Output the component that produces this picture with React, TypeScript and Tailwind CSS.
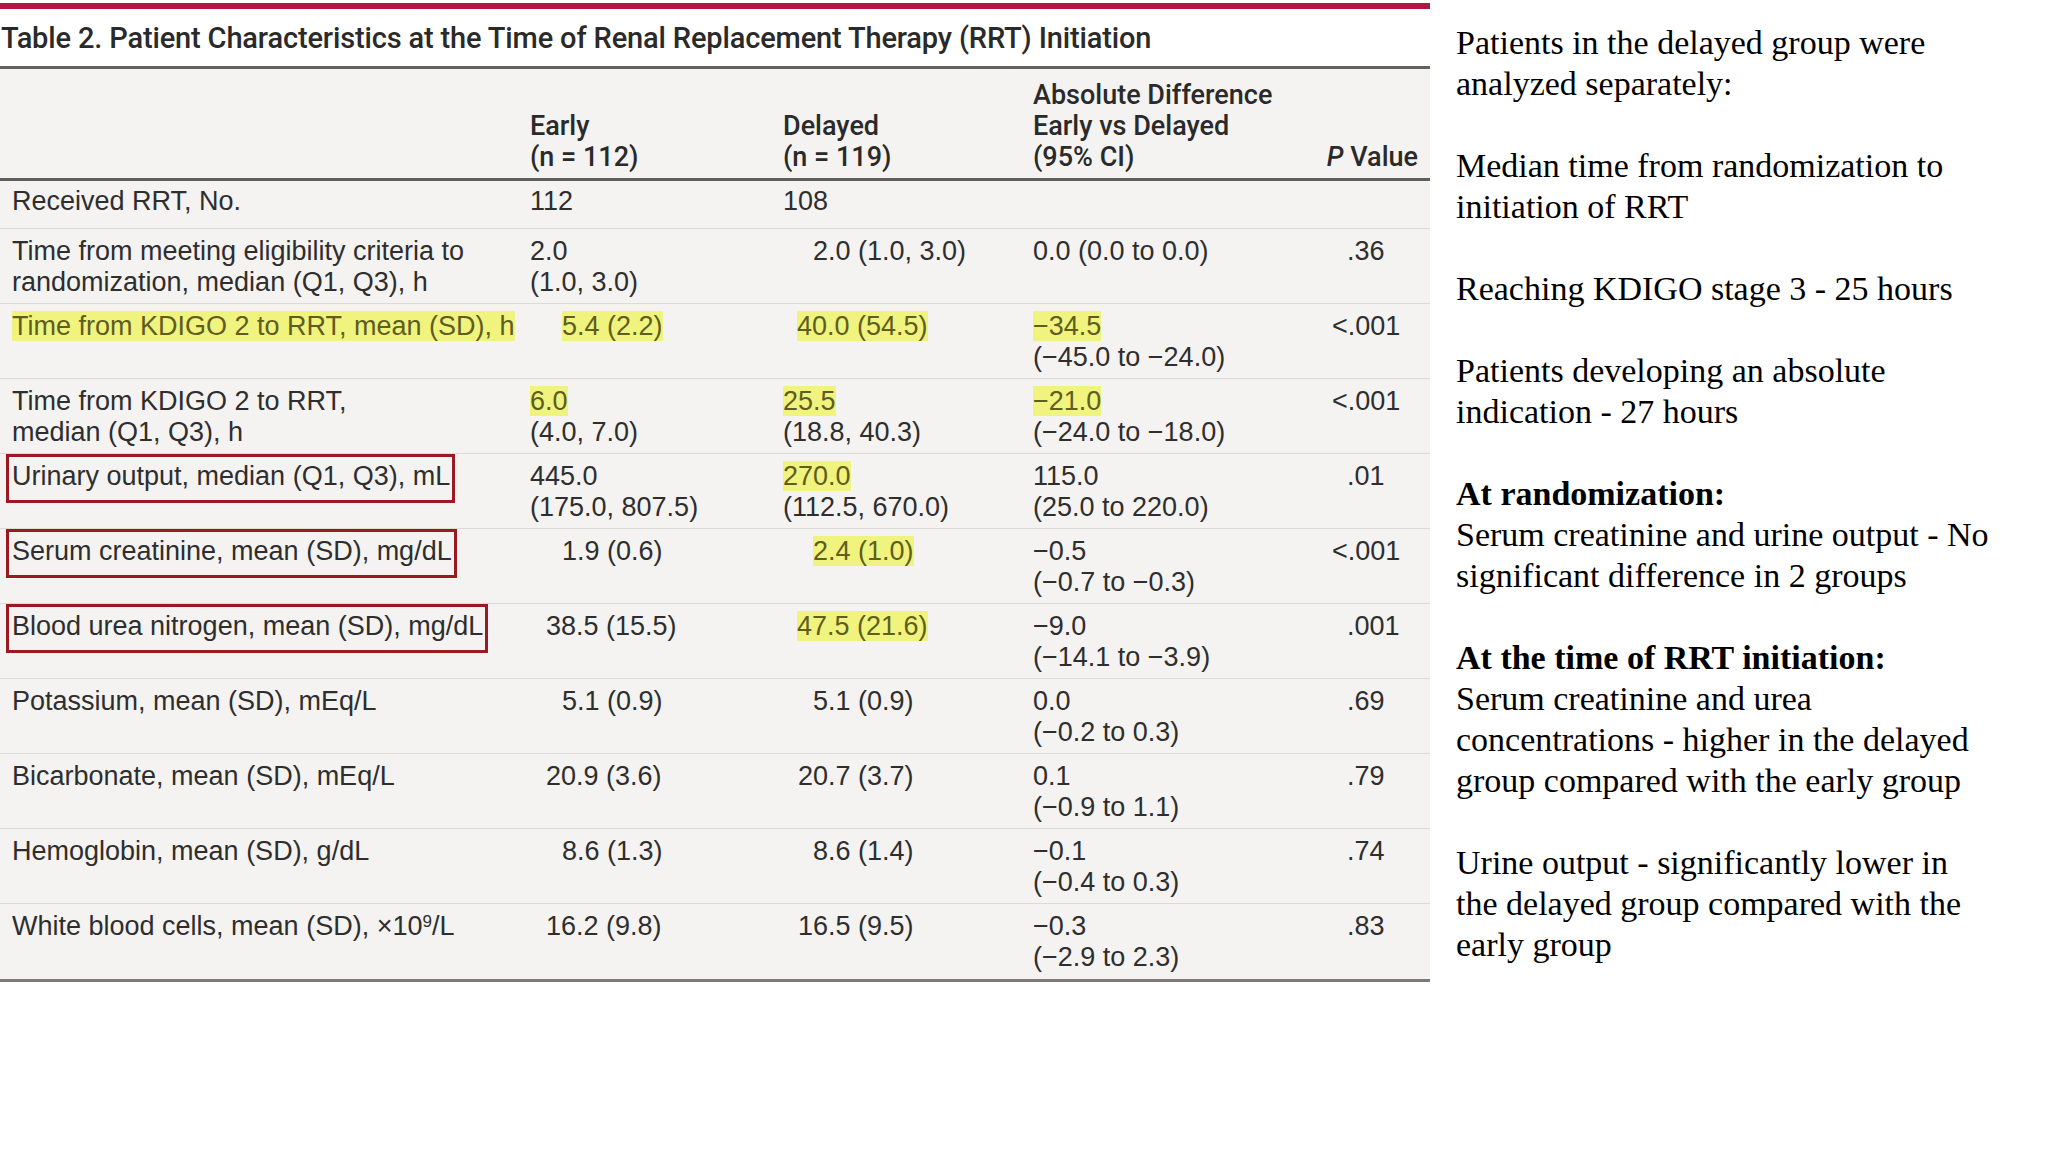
import React from "react";

type Seg = { t: React.ReactNode; hl?: boolean };
type Cell = { lines: Seg[]; off?: number } | null;
type Row = {
  label: Seg[];
  box?: boolean;
  early: Cell;
  delayed: Cell;
  diff: Cell;
  p: { t: string; off: number } | null;
  first?: boolean;
};

const M = "\u2212";

const rows: Row[] = [
  {
    first: true,
    label: [{ t: "Received RRT, No." }],
    early: { lines: [{ t: "112" }], off: 0 },
    delayed: { lines: [{ t: "108" }], off: 1 },
    diff: null,
    p: null,
  },
  {
    label: [{ t: "Time from meeting eligibility criteria to" }, { t: "randomization, median (Q1, Q3), h" }],
    early: { lines: [{ t: "2.0" }, { t: "(1.0, 3.0)" }], off: 0 },
    delayed: { lines: [{ t: "2.0 (1.0, 3.0)" }], off: 31 },
    diff: { lines: [{ t: "0.0 (0.0 to 0.0)" }] },
    p: { t: ".36", off: 16 },
  },
  {
    label: [{ t: "Time from KDIGO 2 to RRT, mean (SD), h", hl: true }],
    early: { lines: [{ t: "5.4 (2.2)", hl: true }], off: 32 },
    delayed: { lines: [{ t: "40.0 (54.5)", hl: true }], off: 15 },
    diff: { lines: [{ t: `${M}34.5`, hl: true }, { t: `(${M}45.0 to ${M}24.0)` }] },
    p: { t: "<.001", off: 1 },
  },
  {
    label: [{ t: "Time from KDIGO 2 to RRT," }, { t: "median (Q1, Q3), h" }],
    early: { lines: [{ t: "6.0", hl: true }, { t: "(4.0, 7.0)" }], off: 0 },
    delayed: { lines: [{ t: "25.5", hl: true }, { t: "(18.8, 40.3)" }], off: 1 },
    diff: { lines: [{ t: `${M}21.0`, hl: true }, { t: `(${M}24.0 to ${M}18.0)` }] },
    p: { t: "<.001", off: 1 },
  },
  {
    label: [{ t: "Urinary output, median (Q1, Q3), mL" }],
    box: true,
    early: { lines: [{ t: "445.0" }, { t: "(175.0, 807.5)" }], off: 0 },
    delayed: { lines: [{ t: "270.0", hl: true }, { t: "(112.5, 670.0)" }], off: 1 },
    diff: { lines: [{ t: "115.0" }, { t: "(25.0 to 220.0)" }] },
    p: { t: ".01", off: 16 },
  },
  {
    label: [{ t: "Serum creatinine, mean (SD), mg/dL" }],
    box: true,
    early: { lines: [{ t: "1.9 (0.6)" }], off: 32 },
    delayed: { lines: [{ t: "2.4 (1.0)", hl: true }], off: 31 },
    diff: { lines: [{ t: `${M}0.5` }, { t: `(${M}0.7 to ${M}0.3)` }] },
    p: { t: "<.001", off: 1 },
  },
  {
    label: [{ t: "Blood urea nitrogen, mean (SD), mg/dL" }],
    box: true,
    early: { lines: [{ t: "38.5 (15.5)" }], off: 16 },
    delayed: { lines: [{ t: "47.5 (21.6)", hl: true }], off: 15 },
    diff: { lines: [{ t: `${M}9.0` }, { t: `(${M}14.1 to ${M}3.9)` }] },
    p: { t: ".001", off: 16 },
  },
  {
    label: [{ t: "Potassium, mean (SD), mEq/L" }],
    early: { lines: [{ t: "5.1 (0.9)" }], off: 32 },
    delayed: { lines: [{ t: "5.1 (0.9)" }], off: 31 },
    diff: { lines: [{ t: "0.0" }, { t: `(${M}0.2 to 0.3)` }] },
    p: { t: ".69", off: 16 },
  },
  {
    label: [{ t: "Bicarbonate, mean (SD), mEq/L" }],
    early: { lines: [{ t: "20.9 (3.6)" }], off: 16 },
    delayed: { lines: [{ t: "20.7 (3.7)" }], off: 16 },
    diff: { lines: [{ t: "0.1" }, { t: `(${M}0.9 to 1.1)` }] },
    p: { t: ".79", off: 16 },
  },
  {
    label: [{ t: "Hemoglobin, mean (SD), g/dL" }],
    early: { lines: [{ t: "8.6 (1.3)" }], off: 32 },
    delayed: { lines: [{ t: "8.6 (1.4)" }], off: 31 },
    diff: { lines: [{ t: `${M}0.1` }, { t: `(${M}0.4 to 0.3)` }] },
    p: { t: ".74", off: 16 },
  },
  {
    label: [
      {
        t: (
          <>
            White blood cells, mean (SD), ×10<sup className="text-[17px]">9</sup>/L
          </>
        ),
      },
    ],
    early: { lines: [{ t: "16.2 (9.8)" }], off: 16 },
    delayed: { lines: [{ t: "16.5 (9.5)" }], off: 16 },
    diff: { lines: [{ t: `${M}0.3` }, { t: `(${M}2.9 to 2.3)` }] },
    p: { t: ".83", off: 16 },
  },
];

function Line({ s }: { s: Seg }) {
  return (
    <div className="whitespace-nowrap">
      {s.hl ? <span className="bg-[#f0f37e] text-[#5f5d1f]">{s.t}</span> : s.t}
    </div>
  );
}

function CellView({ c }: { c: Cell }) {
  if (!c) return <div />;
  return (
    <div style={{ paddingLeft: c.off ?? 0 }}>
      {c.lines.map((s, i) => (
        <Line key={i} s={s} />
      ))}
    </div>
  );
}

export default function App() {
  const grid = "grid grid-cols-[530px_252px_251px_298px_99px]";
  return (
    <div className="w-[2048px] h-[1152px] bg-white flex overflow-hidden">
      {/* Left: table */}
      <div className="w-[1430px] shrink-0 flex flex-col">
        <div className="mt-[3px] h-[6px] bg-[#b3163e]" />
        <div
          className="mt-[12px] h-[34px] leading-[34px] text-[29px] font-medium text-[#2a2a2a] tracking-[-0.15px] whitespace-nowrap pl-[1px]"
          style={{ fontFamily: "Roboto, 'Liberation Sans', sans-serif" }}
        >
          Table 2. Patient Characteristics at the Time of Renal Replacement Therapy (RRT) Initiation
        </div>
        <div className="mt-[11px] h-[3px] bg-[#626262]" />
        <div
          className="bg-[#f4f3f1] text-[27px] leading-[31px] text-[#2e2e2e]"
          style={{ fontFamily: "'Liberation Sans', Arial, sans-serif" }}
        >
          {/* Header */}
          <div
            className={`${grid} h-[109px] items-end pb-[5px] font-medium text-[#2a2a2a]`}
            style={{ fontFamily: "Roboto, 'Liberation Sans', sans-serif" }}
          >
            <div />
            <div>
              <div>Early</div>
              <div>(n = 112)</div>
            </div>
            <div className="pl-[1px]">
              <div>Delayed</div>
              <div>(n = 119)</div>
            </div>
            <div>
              <div className="whitespace-nowrap">Absolute Difference</div>
              <div className="whitespace-nowrap">Early vs Delayed</div>
              <div>(95% CI)</div>
            </div>
            <div className="flex justify-end whitespace-nowrap pr-[12px]">
              <span className="italic">P</span>
              <span>&nbsp;Value</span>
            </div>
          </div>
          <div className="h-[3px] bg-[#5e5e5e]" />
          {rows.map((r, i) => (
            <div
              key={i}
              className={`${grid} ${r.first ? "h-[48px] pt-[5px]" : "h-[75px] pt-[7px]"} ${
                i < rows.length - 1 ? "border-b border-[#dcdad6]" : ""
              }`}
            >
              <div className="pl-[12px]">
                {r.box ? (
                  <div className="relative inline-block whitespace-nowrap">
                    {r.label[0].t}
                    <div className="absolute -left-[6px] -right-[5px] -top-[7px] -bottom-[11px] border-[3px] border-[#9b1a21]" />
                  </div>
                ) : (
                  r.label.map((s, j) => <Line key={j} s={s} />)
                )}
              </div>
              <CellView c={r.early} />
              <CellView c={r.delayed} />
              <CellView c={r.diff} />
              <div>{r.p && <div style={{ paddingLeft: r.p.off }}>{r.p.t}</div>}</div>
            </div>
          ))}
        </div>
        <div className="h-[3px] bg-[#7a7a7a]" />
      </div>

      {/* Right: notes */}
      <div
        className="pl-[26px] pt-[22px] text-[34px] leading-[41px] text-black"
        style={{ fontFamily: "'Liberation Serif', 'Times New Roman', serif" }}
      >
        <p>
          Patients in the delayed group were
          <br />
          analyzed separately:
        </p>
        <p className="mt-[41px]">
          Median time from randomization to
          <br />
          initiation of RRT
        </p>
        <p className="mt-[41px]">Reaching KDIGO stage 3 - 25 hours</p>
        <p className="mt-[41px]">
          Patients developing an absolute
          <br />
          indication - 27 hours
        </p>
        <p className="mt-[41px]">
          <span className="font-bold">At randomization:</span>
          <br />
          Serum creatinine and urine output - No
          <br />
          significant difference in 2 groups
        </p>
        <p className="mt-[41px]">
          <span className="font-bold">At the time of RRT initiation:</span>
          <br />
          Serum creatinine and urea
          <br />
          concentrations - higher in the delayed
          <br />
          group compared with the early group
        </p>
        <p className="mt-[41px]">
          Urine output - significantly lower in
          <br />
          the delayed group compared with the
          <br />
          early group
        </p>
      </div>
    </div>
  );
}
